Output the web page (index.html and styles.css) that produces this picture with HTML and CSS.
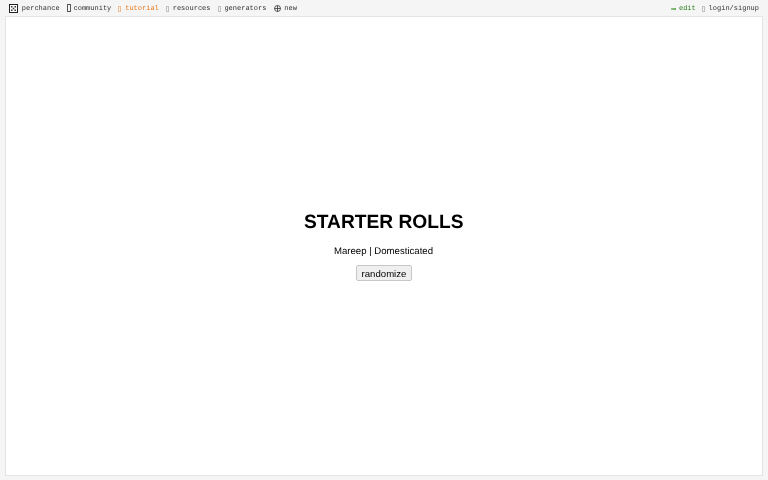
FILE: index.html
```html
<!DOCTYPE html>
<html lang="en">
<head>
    <meta charset="UTF-8">
    <meta name="viewport" content="width=device-width, initial-scale=1.0">
    <title>Starter Rolls</title>
    <link rel="stylesheet" href="styles.css">
</head>
<body>
    <div id="topbar">
        <div class="links">
            <a class="link home" href="#">
                <svg class="die" width="9" height="9" viewBox="0 0 9 9">
                    <rect x="0.5" y="0.5" width="8" height="8" fill="#fff" stroke="#222"/>
                    <rect x="2" y="2" width="1.5" height="1.5" fill="#333"/>
                    <rect x="5.5" y="2" width="1.5" height="1.5" fill="#333"/>
                    <rect x="3.75" y="3.75" width="1.5" height="1.5" fill="#333"/>
                    <rect x="2" y="5.5" width="1.5" height="1.5" fill="#333"/>
                    <rect x="5.5" y="5.5" width="1.5" height="1.5" fill="#333"/>
                </svg>
                perchance
            </a>
            <a class="link community" href="#"><span class="tofu tall"></span>community</a>
            <a class="link orange" href="#"><span class="tofu"></span>tutorial</a>
            <a class="link" href="#"><span class="tofu"></span>resources</a>
            <a class="link" href="#"><span class="tofu"></span>generators</a>
            <a class="link" href="#">
                <svg class="globe" width="7" height="7" viewBox="0 0 7 7">
                    <circle cx="3.5" cy="3.5" r="3" fill="none" stroke="#333" stroke-width="0.8"/>
                    <path d="M3.5 0.5v6M0.5 3.5h6" stroke="#333" stroke-width="0.8"/>
                </svg>
                new
            </a>
        </div>
        <div class="links right">
            <a class="link green" href="#"><span class="pencil"></span>edit</a>
            <a class="link" href="#"><span class="tofu"></span>login/signup</a>
        </div>
    </div>
    <div id="page">
        <h1>STARTER ROLLS</h1>
        <p id="output">Mareep | Domesticated</p>
        <button id="randomize">randomize</button>
    </div>
</body>
</html>
```
FILE: styles.css
```css
html, body {
    height: 100%;
}
body {
    margin: 0;
    background-color: #f5f5f5;
    display: flex;
    flex-direction: column;
    font-family: "Liberation Sans", Arial, sans-serif;
    text-rendering: geometricPrecision;
    overflow: hidden;
}
#topbar {
    height: 16px;
    display: flex;
    justify-content: space-between;
    align-items: center;
    padding: 1px 9px 0 9px;
    box-sizing: border-box;
    font-family: "Liberation Mono", monospace;
    font-size: 7px;
    will-change: transform;
}
.links {
    display: flex;
    align-items: center;
    gap: 7.1px;
}
.links.right {
    gap: 6px;
}
.link {
    display: flex;
    align-items: center;
    gap: 3.8px;
    padding-top: 1px;
    color: #333;
    text-decoration: none;
}
.link.community {
    gap: 2.8px;
}
.link.orange {
    color: #e8791c;
}
.link.green {
    gap: 3px;
    color: #2a7d1e;
}
.die {
    margin-top: -2px;
}
.globe {
    margin-top: -1px;
}
.tofu {
    display: inline-block;
    width: 1px;
    height: 4px;
    border: 1px solid #aaa;
    opacity: 0.7;
    margin-top: -1px;
}
.tofu.tall {
    width: 2px;
    height: 6px;
    opacity: 1;
    border-color: #555;
    margin-top: -3px;
}
.orange .tofu {
    border-color: #e8a56c;
}
.pencil {
    display: inline-block;
    width: 5px;
    height: 2px;
    margin-top: -1px;
    background: linear-gradient(to right, #9cc890, #6aa85c);
}
#page {
    flex: 1;
    margin: 0 5px 4px 5px;
    padding-top: 1px;
    background: #fff;
    border: 1px solid #e4e4e4;
    display: flex;
    flex-direction: column;
    align-items: center;
    justify-content: center;
    color: #000;
}
h1 {
    margin: 0 0 12px 0;
    font-size: 19.2px;
    line-height: 22px;
    will-change: transform;
}
#output {
    margin: 0 0 8.5px 0;
    font-size: 9.6px;
    line-height: 11px;
    will-change: transform;
}
#randomize {
    font-family: "Liberation Sans", Arial, sans-serif;
    font-size: 9.6px;
    height: 16px;
    width: 56px;
    padding: 0;
    background: #efefef;
    border: 1px solid #c8c8c8;
    border-radius: 2px;
    color: #000;
    will-change: transform;
}
```
